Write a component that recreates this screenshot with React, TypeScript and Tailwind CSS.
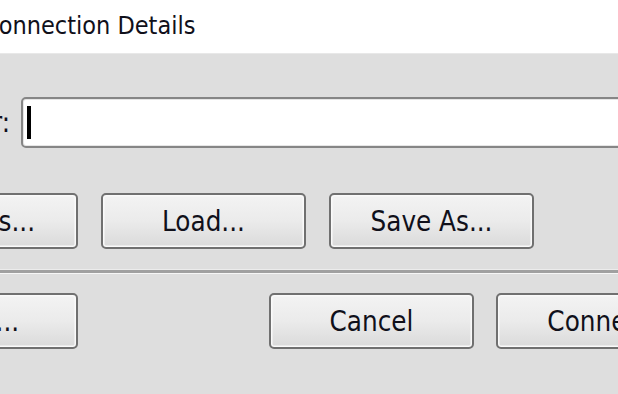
import React from "react";

function Btn({ children, className = "" }: { children: React.ReactNode; className?: string }) {
  return (
    <div
      className={
        "flex h-[56px] w-[205px] shrink-0 items-center justify-center rounded-[5px] border-2 border-[#707070] bg-gradient-to-b from-[#f3f3f3] via-[#ebebeb] to-[#dadada] pt-[1px] text-[27.5px] text-[#10101a] shadow-[inset_0_0_0_1.5px_#fafafa] " +
        className
      }
    >
      {children}
    </div>
  );
}

export default function App() {
  return (
    <div className="relative h-[394px] w-[618px] overflow-hidden bg-[#dedede] font-['DejaVu_Sans_Condensed','DejaVu_Sans',sans-serif] font-stretch-condensed">
      <div className="h-[53px] bg-white pt-[12px]">
        <div className="-ml-[17px] whitespace-nowrap text-[25px] leading-[28px] text-[#10101a]">
          Connection Details
        </div>
      </div>
      <div className="h-px bg-[#e8e8e8]" />
      <div className="pt-[43px]">
        <div className="flex items-center">
          <div className="-ml-[110px] w-[120px] shrink-0 whitespace-nowrap text-right text-[27.5px] text-[#10101a]">
            Server:
          </div>
          <div className="ml-[11px] flex h-[51px] w-[700px] shrink-0 items-center rounded-[5px] border-2 border-[#868686] bg-white pl-[4px] shadow-[inset_0_0_0_1px_#e6e6e6]">
            <div className="h-[33px] w-[4px] bg-black" />
          </div>
        </div>
        <div className="mt-[45px] flex gap-[23px] -ml-[127px]">
          <Btn>Options...</Btn>
          <Btn>Load...</Btn>
          <Btn>Save As...</Btn>
        </div>
        <div className="mt-[20px] h-px bg-[#ececec]" />
        <div className="h-[3px] bg-[#a0a0a0]" />
        <div className="h-px bg-[#f6f6f6]" />
        <div className="mt-[19px] flex -ml-[127px]">
          <Btn>Proxy...</Btn>
          <Btn className="ml-[191px]">Cancel</Btn>
          <Btn className="ml-[22px]">Connect</Btn>
        </div>
      </div>
    </div>
  );
}
